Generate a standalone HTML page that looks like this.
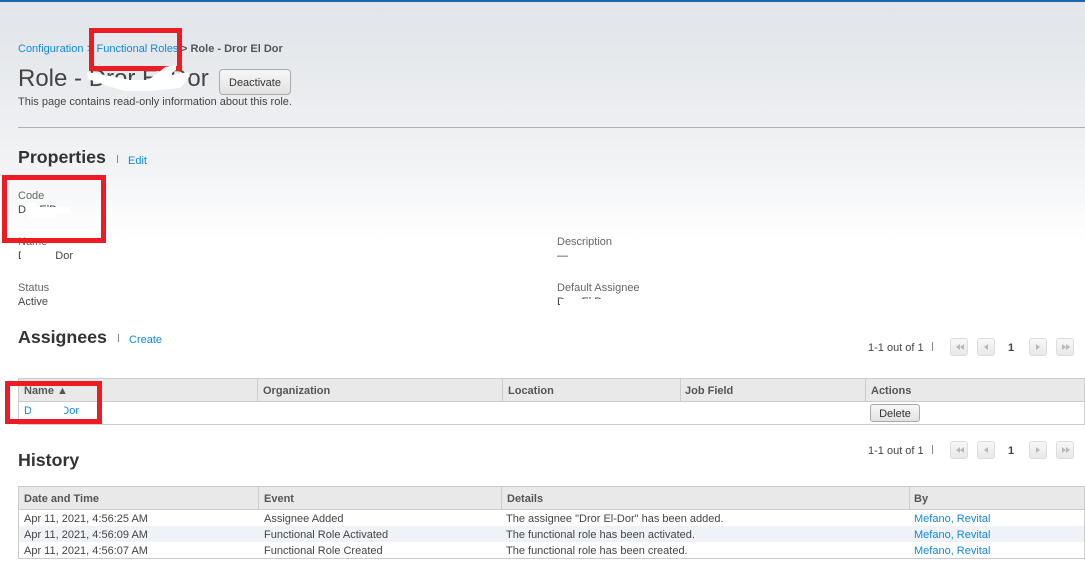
<!DOCTYPE html>
<html><head><meta charset="utf-8"><style>
html,body{margin:0;padding:0}
body{width:1085px;height:564px;position:relative;overflow:hidden;background:#fff;font-family:"Liberation Sans",sans-serif;font-size:11px;color:#444}
.bg{position:absolute;left:0;top:0;width:1085px;height:250px;background:linear-gradient(#e2e5ea 0,#e4e7eb 40px,#f2f3f5 165px,#fff 240px)}
.t{position:absolute;white-space:nowrap;line-height:14px;margin-top:1px}
.l{color:#0f8ae0}
.g{color:#666}
h2{position:absolute;margin:0;font-size:17.8px;line-height:22px;font-weight:bold;color:#333;white-space:nowrap}
.sep{position:absolute;width:1px;height:9px;background:#888}
.btn{position:absolute;box-sizing:border-box;border:1px solid #aaa;border-radius:3px;background:linear-gradient(#f7f7f7,#e2e2e2);color:#333;text-align:center;white-space:nowrap}
.tb{position:absolute;left:18px;width:1067px;box-sizing:border-box;border:1px solid #ccc;border-right:1px solid #ccc}
.th{position:absolute;left:0;top:0;height:22px;width:1065px;background:#e9e9e9;border-bottom:1px solid #ccc}
.c{position:absolute;top:0;width:1px;height:22px;background:#ccc}
.th b{position:absolute;top:5px;line-height:14px;font-weight:bold;color:#555;white-space:nowrap}
.pg{position:absolute;width:18px;height:18px;box-sizing:border-box;border:1px solid #ddd;border-radius:3px;background:linear-gradient(#f8f8f8,#e8e8e8)}
.red{position:absolute;box-sizing:border-box;border:5px solid #ed1c24}
svg{position:absolute}
</style></head><body>
<div class="bg"></div>
<div style="position:absolute;left:0;top:0;width:1085px;height:2px;background:#1a66ad"></div>

<span class="t l" style="left:18px;top:41px">Configuration</span>
<span class="t g" style="left:87px;top:41px">&gt;</span>
<span class="t l" style="left:96.500px;top:41px">Functional Roles</span>
<span class="t" style="left:181px;top:41px;font-weight:bold;color:#555">&gt; Role - Dror El Dor</span>

<span class="t" style="left:18px;top:64px;font-size:24px;line-height:28px;color:#444">Role - Dror El Dor</span>
<div class="btn" style="left:219px;top:69px;width:72px;height:26px;line-height:26px;border-radius:4px">Deactivate</div>
<span class="t" style="left:18px;top:94px">This page contains read-only information about this role.</span>
<div style="position:absolute;left:18px;top:127px;width:1067px;height:1px;background:#b0b0b4"></div>

<h2 style="left:18px;top:146px">Properties</h2>
<div class="sep" style="left:117px;top:155px;height:8px"></div>
<span class="t l" style="left:128px;top:153px">Edit</span>

<span class="t g" style="left:18px;top:188px">Code</span>
<span class="t" style="left:18px;top:202px">DrorElDor</span>
<span class="t g" style="left:18px;top:234px">Name</span>
<span class="t" style="left:18px;top:248px">Dror El Dor</span>
<span class="t g" style="left:18px;top:280px">Status</span>
<span class="t" style="left:18px;top:294px">Active</span>
<span class="t g" style="left:557px;top:234px">Description</span>
<span class="t" style="left:557px;top:248px">—</span>
<span class="t g" style="left:557px;top:280px">Default Assignee</span>
<span class="t" style="left:557px;top:294px">Dror El Dor</span>

<!-- white redaction scribbles -->
<svg width="1085" height="564" style="left:0;top:0">
<polygon fill="#fff" points="26,203 36,203 36,207 70,207 70,213 55,214 54,218 30,218 26,214"/>
<polygon fill="#fff" points="21,248 55,248 55,262 21,262"/>
<rect x="560" y="299" width="70" height="9" fill="#fff"/>
<rect x="557" y="305" width="80" height="5" fill="#fff"/>
<rect x="18" y="308" width="100" height="3" fill="#fff"/>
</svg>

<h2 style="left:18px;top:326px">Assignees</h2>
<div class="sep" style="left:118px;top:334px;height:8px"></div>
<span class="t l" style="left:129px;top:332px">Create</span>

<span class="t" style="left:868px;top:340px">1-1 out of 1</span>
<div class="sep" style="left:932px;top:342px"></div>
<div class="pg" style="left:950px;top:338px"></div>
<div class="pg" style="left:977px;top:338px"></div>
<span class="t" style="left:1008px;top:340px;font-weight:bold">1</span>
<div class="pg" style="left:1029px;top:338px"></div>
<div class="pg" style="left:1056px;top:338px"></div>

<div class="tb" style="top:378px;height:47px">
  <div class="th"><b style="left:5px">Name ▲</b><b style="left:244px">Organization</b><b style="left:489px">Location</b><b style="left:666px">Job Field</b><b style="left:852px">Actions</b>
  <i class="c" style="left:238px"></i><i class="c" style="left:483px"></i><i class="c" style="left:661px"></i><i class="c" style="left:846px"></i></div>
</div>
<span class="t l" style="left:24px;top:403px">Dror El Dor</span>
<div style="position:absolute;left:31px;top:403px;width:33px;height:15px;background:#fff"></div>
<div class="btn" style="left:870px;top:404px;width:50px;height:18px;line-height:18px">Delete</div>

<h2 style="left:18px;top:449px">History</h2>
<span class="t" style="left:868px;top:443px">1-1 out of 1</span>
<div class="sep" style="left:932px;top:445px"></div>
<div class="pg" style="left:950px;top:441px"></div>
<div class="pg" style="left:977px;top:441px"></div>
<span class="t" style="left:1008px;top:443px;font-weight:bold">1</span>
<div class="pg" style="left:1029px;top:441px"></div>
<div class="pg" style="left:1056px;top:441px"></div>

<svg width="1085" height="564" style="left:0;top:0" fill="#b8b8b8">
<path d="M960 344v6l-4-3zM964 344v6l-4-3zM988 344v6l-4-3zM1036 344v6l4-3zM1062 344v6l4-3zM1066 344v6l4-3z"/>
<path d="M960 447v6l-4-3zM964 447v6l-4-3zM988 447v6l-4-3zM1036 447v6l4-3zM1062 447v6l4-3zM1066 447v6l4-3z"/>
</svg>

<div class="tb" style="top:486px;height:73px">
  <div class="th"><b style="left:5px">Date and Time</b><b style="left:245px">Event</b><b style="left:488px">Details</b><b style="left:895px">By</b>
  <i class="c" style="left:239px"></i><i class="c" style="left:482px"></i><i class="c" style="left:890px"></i></div>
  <div style="position:absolute;left:0;top:39px;width:1065px;height:16px;background:#eff2f6"></div>
</div>
<span class="t" style="left:24px;top:511px">Apr 11, 2021, 4:56:25 AM</span>
<span class="t" style="left:264px;top:511px">Assignee Added</span>
<span class="t" style="left:506px;top:511px">The assignee "Dror El-Dor" has been added.</span>
<span class="t l" style="left:914px;top:511px">Mefano, Revital</span>
<span class="t" style="left:24px;top:527px">Apr 11, 2021, 4:56:09 AM</span>
<span class="t" style="left:264px;top:527px">Functional Role Activated</span>
<span class="t" style="left:506px;top:527px">The functional role has been activated.</span>
<span class="t l" style="left:914px;top:527px">Mefano, Revital</span>
<span class="t" style="left:24px;top:543px">Apr 11, 2021, 4:56:07 AM</span>
<span class="t" style="left:264px;top:543px">Functional Role Created</span>
<span class="t" style="left:506px;top:543px">The functional role has been created.</span>
<span class="t l" style="left:914px;top:543px">Mefano, Revital</span>

<div class="red" style="left:89px;top:28px;width:93px;height:43px"></div>
<div class="red" style="left:2px;top:175px;width:104px;height:68px"></div>
<div class="red" style="left:5px;top:381px;width:97px;height:43px"></div>
<svg width="1085" height="564" style="left:0;top:0"><polygon fill="#fff" points="87,72 110,76 130,80 148,80 158,73 165,67 176,65 176,70 168,76 172,75 188,72 190,76 184,84 180,88 150,91 125,91 108,86 88,79"/></svg>
</body></html>
